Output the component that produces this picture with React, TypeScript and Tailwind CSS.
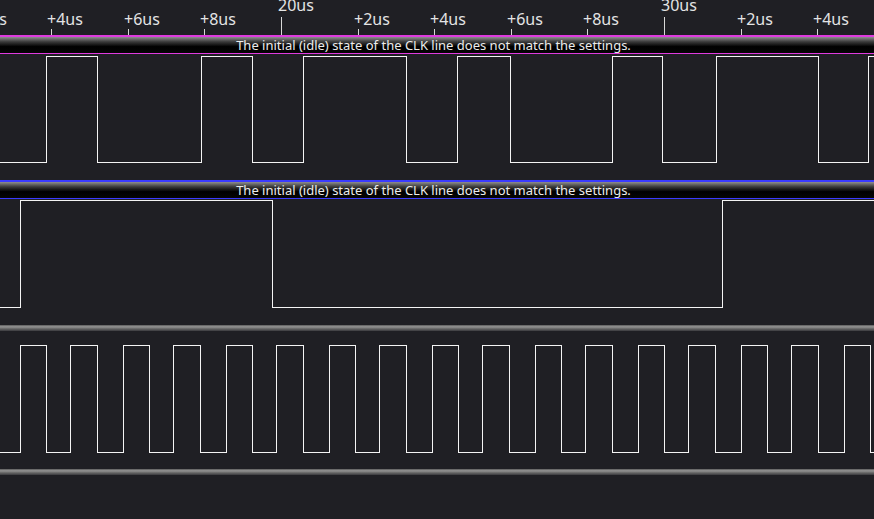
import React from "react";

const PX2US = 76.6;
const T20 = 281.5;

type Tick = { x: number; label: string; major: boolean };

const ticks: Tick[] = (() => {
  const labels = ["+2us", "+4us", "+6us", "+8us", "20us", "+2us", "+4us", "+6us", "+8us", "30us", "+2us", "+4us", "+6us"];
  return labels.map((l, i) => ({
    x: T20 + (i - 4) * PX2US,
    label: l,
    major: !l.startsWith("+"),
  }));
})();

function Ruler() {
  return (
    <div className="relative h-[35px] w-full overflow-hidden">
      {ticks.map((t, i) => (
        <React.Fragment key={i}>
          <div
            className={
              t.major
                ? "absolute top-[17px] h-[18px] w-px bg-[#d8d8d8]"
                : "absolute top-[29px] h-[6px] w-px bg-[#d8d8d8]"
            }
            style={{ left: Math.floor(t.x) }}
          />
          <div
            className={
              t.major
                ? "absolute top-[-5px] whitespace-nowrap text-[16px] leading-[20px] text-[#e4e4e4]"
                : "absolute top-[9px] whitespace-nowrap text-[16px] leading-[20px] text-[#e4e4e4]"
            }
            style={{ left: Math.floor(t.x) - (t.major ? 3 : 4) }}
          >
            {t.label}
          </div>
        </React.Fragment>
      ))}
    </div>
  );
}

function WarnBar({ color }: { color: "magenta" | "blue" }) {
  const line = color === "magenta" ? "bg-[#de3ade]" : "bg-[#3a3aff]";
  return (
    <div className="flex flex-col">
      <div className={`h-[2px] ${line}`} />
      <div className="flex h-[16px] items-center justify-center bg-[linear-gradient(to_bottom,#8e8e8e_0%,#3a3a3a_30%,#000000_60%,#050505_100%)] pr-[7px]">
        <span className="whitespace-nowrap text-[13px] leading-[16px] text-[#ececec]">
          The initial (idle) state of the CLK line does not match the settings.
        </span>
      </div>
      <div className={`h-px ${line}`} />
    </div>
  );
}

function Sep() {
  return <div className="h-[6px] bg-[linear-gradient(to_bottom,#5a5a5a_0%,#959595_30%,#6a6a6a_60%,#3a3a3e_100%)]" />;
}

function Wave({ edges, startHigh, hi, lo, h }: { edges: number[]; startHigh: boolean; hi: number; lo: number; h: number }) {
  let level = startHigh;
  const pts: string[] = [];
  pts.push(`0,${level ? hi : lo}`);
  for (const e of edges) {
    const x = Math.round(e) + 0.5;
    pts.push(`${x},${level ? hi : lo}`);
    level = !level;
    pts.push(`${x},${level ? hi : lo}`);
  }
  pts.push(`874,${level ? hi : lo}`);
  return (
    <svg width={874} height={h} className="block">
      <polyline points={pts.join(" ")} fill="none" stroke="#f4f4f4" strokeWidth={1.3} shapeRendering="crispEdges" />
    </svg>
  );
}

const ch1Edges = [46, 97, 201, 252, 303, 406, 457, 510, 612, 662, 716, 818, 868];
const ch2Edges = [20, 272, 722];
const clkEdges: number[] = (() => {
  const r: number[] = [];
  for (let k = 0; k < 17; k++) {
    const f = 46 + 51.47 * k;
    const rise = f - 26 - (k % 2);
    if (rise < 874) r.push(rise);
    if (f < 874) r.push(f);
  }
  return r;
})();

export default function App() {
  return (
    <div
      className="flex h-[519px] w-[874px] flex-col overflow-hidden bg-[#1f1f24]"
      style={{ fontFamily: '"Noto Sans", "Open Sans", sans-serif' }}
    >
      <Ruler />
      <WarnBar color="magenta" />
      <div className="h-[126px]">
        <Wave edges={ch1Edges} startHigh={false} hi={2.5} lo={108.5} h={126} />
      </div>
      <WarnBar color="blue" />
      <div className="h-[126px]">
        <Wave edges={ch2Edges} startHigh={false} hi={1.5} lo={108.5} h={126} />
      </div>
      <Sep />
      <div className="h-[138px]">
        <Wave edges={clkEdges} startHigh={false} hi={14.5} lo={121.5} h={138} />
      </div>
      <Sep />
      <div className="flex-1" />
    </div>
  );
}
